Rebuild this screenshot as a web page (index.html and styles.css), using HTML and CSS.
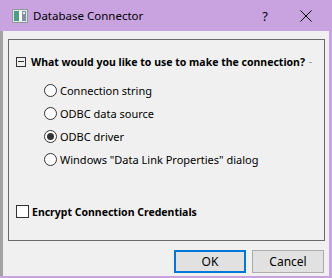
FILE: index.html
```html
<!DOCTYPE html>
<html lang="en">
<head>
  <meta charset="UTF-8">
  <title>Database Connector</title>
  <link rel="stylesheet" href="styles.css">
</head>
<body>

  <div class="window">
    <!-- Title bar -->
    <div class="titlebar">
      <svg class="app-icon" width="16" height="14" viewBox="0 0 16 14">
        <rect x="0.5" y="0.5" width="15" height="13" fill="#dfe6e6" stroke="#8c9c9c"/>
        <rect x="2" y="2" width="5" height="10" fill="#4f9c86"/>
        <rect x="7" y="2" width="3" height="10" fill="#ffffff"/>
        <rect x="10" y="2" width="4" height="10" fill="#7f93a3"/>
        <rect x="11" y="3" width="2" height="2" fill="#e9eef2"/>
      </svg>
      <span class="title">Database Connector</span>
      <span class="help">?</span>
      <svg class="close" width="12" height="12" viewBox="0 0 12 12">
        <path d="M0.5 0.5 L11.5 11.5 M11.5 0.5 L0.5 11.5" stroke="#000" stroke-width="1"/>
      </svg>
    </div>

    <!-- Client area -->
    <div class="client">
      <div class="group">
        <div class="group-head">
          <span class="collapse"></span>
          <span class="head-text">What would you like to use to make the connection?</span>
          <span class="head-dash"></span>
        </div>

        <div class="options">
          <div class="option"><span class="radio"></span>Connection string</div>
          <div class="option"><span class="radio"></span>ODBC data source</div>
          <div class="option"><span class="radio checked"></span>ODBC driver</div>
          <div class="option"><span class="radio"></span>Windows "Data Link Properties" dialog</div>
        </div>

        <div class="encrypt"><span class="checkbox"></span>Encrypt Connection Credentials</div>
      </div>

      <div class="buttons">
        <button class="btn default">OK</button>
        <button class="btn">Cancel</button>
      </div>
    </div>
  </div>

</body>
</html>
```

FILE: styles.css
```css
* { margin: 0; padding: 0; box-sizing: border-box; }
body { background: #c9a3e0; font-family: "Noto Sans", "Liberation Sans", sans-serif; font-size: 11px; color: #000; white-space: nowrap; }

.window { width: 332px; height: 278px; display: flex; flex-direction: column; }

/* Title bar */
.titlebar { height: 31px; display: flex; align-items: center; padding-left: 12px; }
.app-icon { flex: none; }
.title { margin-left: 5px; color: #000; font-size: 11.5px; }
.help { margin-left: auto; margin-right: 32px; font-size: 13px; }
.close { margin-right: 20px; }

/* Client area */
.client {
  flex: 1;
  background: #f0f0f0;
  border-left: 3px solid #a3a3a3;
  margin-right: 3px;
  margin-bottom: 2px;
  padding: 8px 4px 3px 5px;
  display: flex;
  flex-direction: column;
}

.group {
  height: 202px;
  border: 1px solid #6a6a6a;
  padding: 15px 0 0 7px;
  display: flex;
  flex-direction: column;
}

.group-head { height: 14px; display: flex; align-items: center; font-weight: bold; font-size: 10.5px; }
.collapse {
  width: 10px; height: 10px;
  border: 1px solid #333;
  position: relative;
  margin-right: 5px;
  flex: none;
}
.collapse::after {
  content: "";
  position: absolute;
  left: 1px; right: 1px; top: 3px;
  height: 1px;
  background: #333;
}
.head-dash { width: 3px; height: 1px; background: #a6a6a6; margin-left: 4px; flex: none; }

.options { margin-top: 10px; padding-left: 28px; }
.option { height: 23px; display: flex; align-items: center; }

.radio {
  width: 13px; height: 13px;
  border: 1px solid #333;
  border-radius: 50%;
  background: #fff;
  margin-right: 3px;
  flex: none;
  display: flex;
  align-items: center;
  justify-content: center;
}
.radio.checked::after {
  content: "";
  width: 7px; height: 7px;
  border-radius: 50%;
  background: #333;
}

.encrypt { margin-top: 29px; height: 23px; display: flex; align-items: center; font-weight: bold; font-size: 10.5px; }
.checkbox {
  width: 13px; height: 13px;
  border: 1px solid #333;
  background: #fff;
  margin-right: 3px;
  flex: none;
}

/* Buttons */
.buttons { margin-top: 9px; display: flex; justify-content: flex-end; gap: 6px; padding-right: 1px; }
.btn {
  width: 72px; height: 23px;
  background: #e1e1e1;
  border: 1px solid #adadad;
  font-family: inherit;
  font-size: 12px;
  color: #000;
}
.btn.default { border: 2px solid #0078d7; }
```
